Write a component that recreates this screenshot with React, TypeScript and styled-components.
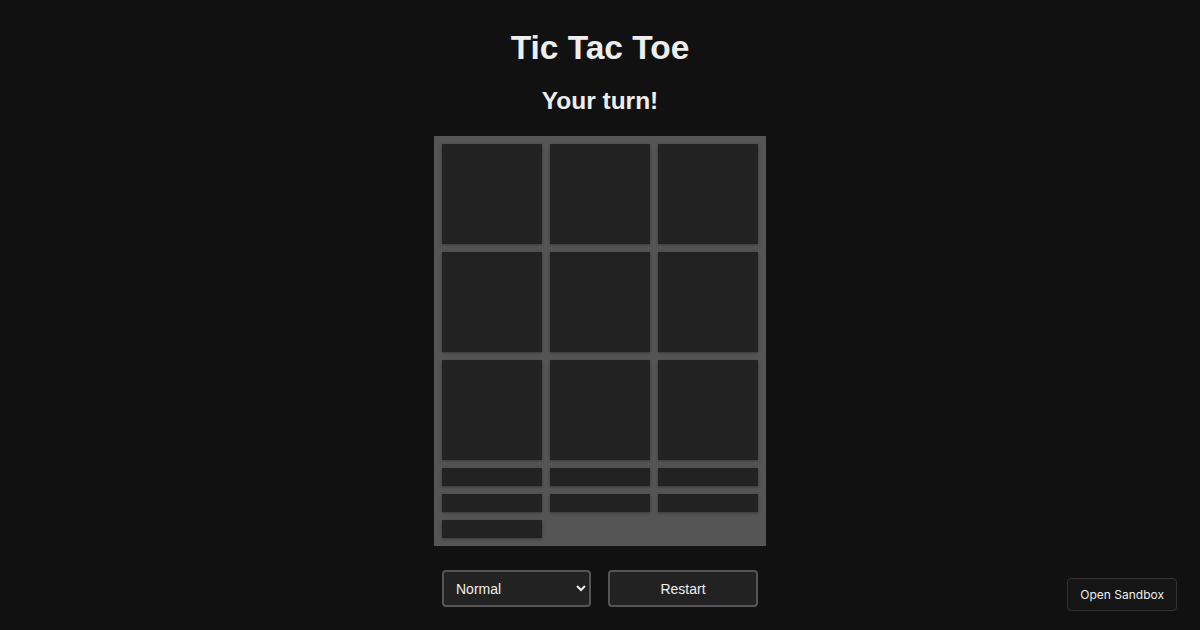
import * as React from 'react';
import styled, { createGlobalStyle } from 'styled-components';

const GlobalStyle = createGlobalStyle`
  html, body {
    margin: 0;
    padding: 0;
    background: #111111;
    color: #eeeeee;
    font-family: "Liberation Sans", Arial, sans-serif;
  }
`;

const Page = styled.div`
  min-height: 100vh;
  box-sizing: border-box;
  padding: 8px;
  display: flex;
  flex-direction: column;
  align-items: center;
`;

const Title = styled.h1`
  font-size: 33.5px;
  font-weight: bold;
  margin: 21px 0;
  line-height: 37px;
`;

const Status = styled.h2`
  font-size: 24.5px;
  font-weight: bold;
  margin: 0 0 21px;
  line-height: 28px;
`;

const Board = styled.div`
  display: grid;
  grid-template-columns: repeat(3, 100px);
  grid-template-rows: repeat(3, 100px) repeat(3, 18px);
  gap: 8px;
  padding: 8px;
  background: #555555;
`;

const Cell = styled.button`
  border: none;
  padding: 0;
  background: #222222;
  box-shadow: 0 1px 3px rgba(0, 0, 0, 0.35);
  cursor: pointer;
`;

const Controls = styled.div`
  display: flex;
  gap: 17px;
  margin-top: 24px;
`;

const Select = styled.select`
  width: 149px;
  height: 37px;
  box-sizing: border-box;
  padding: 0 8px 0 8px;
  background: #222222;
  color: #eeeeee;
  border: 2px solid #555555;
  border-radius: 4px;
  font-family: "Liberation Sans", Arial, sans-serif;
  font-size: 14px;
  color-scheme: dark;
`;

const Button = styled.button`
  width: 150px;
  height: 37px;
  box-sizing: border-box;
  background: #222222;
  color: #eeeeee;
  border: 2px solid #555555;
  border-radius: 4px;
  font-family: "Liberation Sans", Arial, sans-serif;
  font-size: 14px;
  cursor: pointer;
`;

const SandboxLink = styled.a`
  position: fixed;
  right: 23px;
  bottom: 19px;
  padding: 8px 12px;
  background: #151515;
  border: 1px solid #333333;
  border-radius: 4px;
  color: #eeeeee;
  font-family: Inter, "Liberation Sans", sans-serif;
  font-size: 12px;
  line-height: 15px;
  text-decoration: none;
`;

const cells = Array.from({ length: 16 }, (_, i) => i);

export default function App() {
  const [level, setLevel] = React.useState('normal');
  return (
    <>
      <GlobalStyle />
      <Page>
        <Title>Tic Tac Toe</Title>
        <Status>Your turn!</Status>
        <Board>
          {cells.map(i => (
            <Cell key={i} aria-label={`square ${i + 1}`} />
          ))}
        </Board>
        <Controls>
          <Select value={level} onChange={e => setLevel(e.target.value)}>
            <option value="easy">Easy</option>
            <option value="normal">Normal</option>
            <option value="hard">Hard</option>
          </Select>
          <Button>Restart</Button>
        </Controls>
      </Page>
      <SandboxLink href="#">Open Sandbox</SandboxLink>
    </>
  );
}
